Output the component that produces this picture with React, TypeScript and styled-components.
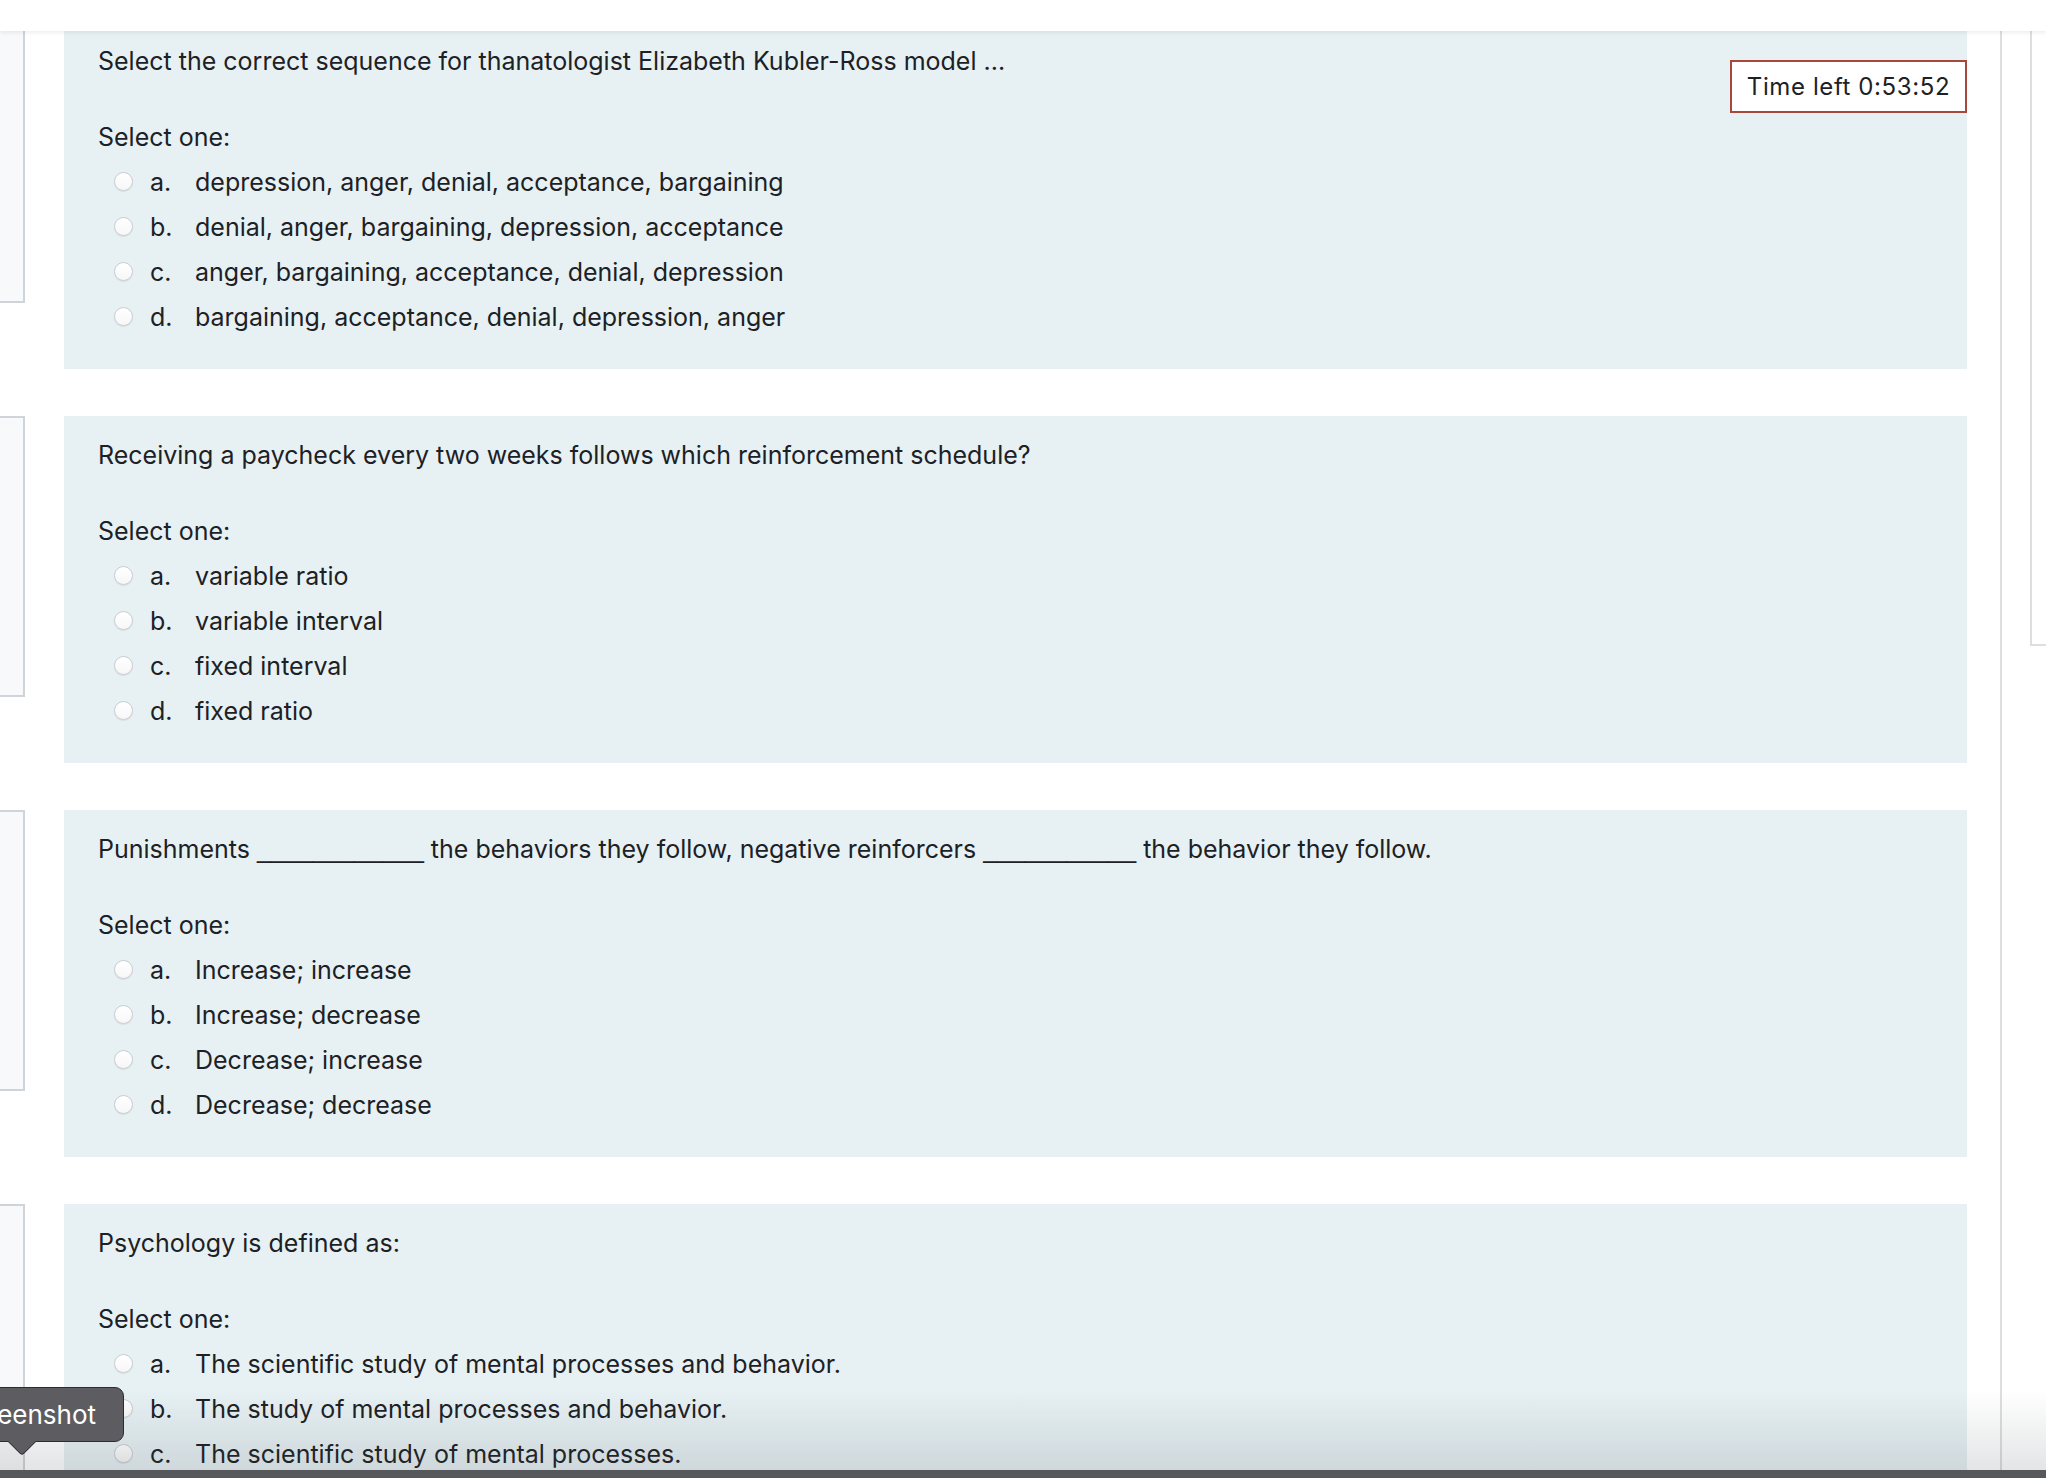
import React from "react";
import styled, { createGlobalStyle } from "styled-components";

const GlobalStyle = createGlobalStyle`
  html, body {
    margin: 0;
    padding: 0;
    height: 100%;
    overflow: hidden;
    background: #ffffff;
  }
  body {
    font-family: "Inter", "Liberation Sans", Arial, sans-serif;
    color: #1d2125;
  }
  * {
    box-sizing: border-box;
  }
`;

const NavBar = styled.div`
  position: fixed;
  top: 0;
  left: 0;
  right: 0;
  height: 31px;
  background: #ffffff;
  box-shadow: 0 2px 4px rgba(0, 0, 0, 0.07);
  z-index: 10;
`;

const Page = styled.div`
  display: flex;
  align-items: stretch;
  min-height: 100vh;
  padding-top: 22px;
`;

const QuestionColumn = styled.div`
  position: relative;
  flex: 0 0 1967px;
  display: flex;
  flex-direction: column;
  gap: 47px;
`;

const QuestionRow = styled.div`
  display: flex;
  align-items: flex-start;
  gap: 39px;
`;

const InfoBox = styled.div<{ $open?: boolean }>`
  flex: 0 0 25px;
  height: ${({ $open }) => ($open ? "600px" : "281px")};
  background: #f8f9fa;
  border: 2px solid #cfd4da;
  border-left: none;
  border-bottom: ${({ $open }) => ($open ? "none" : "2px solid #cfd4da")};
`;

const Card = styled.div`
  flex: 1;
  height: 347px;
  background: #e7f1f4;
  padding: 21px 34px 30px 34px;
  font-size: 25px;
`;

const QuestionText = styled.div`
  line-height: 36px;
  margin-bottom: 40px;
`;

const Blank = styled.span`
  font-family: "Liberation Sans", Arial, sans-serif;
`;

const Prompt = styled.div`
  line-height: 36px;
`;

const Options = styled.div`
  margin-top: 4px;
  padding-left: 16px;
  display: flex;
  flex-direction: column;
`;

const Option = styled.label`
  display: flex;
  align-items: center;
  height: 45px;
`;

const Radio = styled.span`
  flex: 0 0 19px;
  width: 19px;
  height: 19px;
  border-radius: 50%;
  background: linear-gradient(#ffffff, #f7f7f7);
  border: 1px solid #c9cdd1;
  box-shadow: 0 1px 1px rgba(0, 0, 0, 0.08);
`;

const Letter = styled.span`
  flex: 0 0 62px;
  padding-left: 17px;
`;

const Timer = styled.div`
  position: absolute;
  top: 38px;
  right: 0;
  width: 237px;
  height: 53px;
  background: #ffffff;
  border: 2px solid #a8473b;
  display: flex;
  align-items: center;
  justify-content: center;
  font-size: 24px;
  letter-spacing: 0.6px;
  color: #1d2125;
`;

const RightRail = styled.div`
  flex: 0 0 63px;
  display: flex;
  padding-left: 33px;
`;

const Divider = styled.div`
  flex: 0 0 30px;
  border-left: 2px solid #dedede;
  margin-top: -22px;
`;

const SideBlock = styled.div`
  flex: 0 0 40px;
  height: 646px;
  margin-top: -22px;
  border-left: 2px solid #dedede;
  border-bottom: 2px solid #dedede;
`;

const DockShade = styled.div`
  position: fixed;
  left: 0;
  right: 0;
  bottom: 8px;
  height: 80px;
  background: linear-gradient(rgba(60, 70, 75, 0), rgba(60, 70, 75, 0.14));
  pointer-events: none;
  z-index: 20;
`;

const DockBar = styled.div`
  position: fixed;
  left: 0;
  right: 0;
  bottom: 0;
  height: 8px;
  background: #57585b;
  z-index: 21;
`;

const Tooltip = styled.div`
  position: fixed;
  right: calc(100% - 124px);
  top: 1387px;
  height: 55px;
  padding: 0 27px 0 20px;
  display: flex;
  align-items: center;
  background: #5d5d61;
  border: 1.5px solid #2c2c2e;
  border-radius: 9px;
  color: #ffffff;
  font-size: 26px;
  white-space: nowrap;
  z-index: 30;
`;

const TooltipArrow = styled.span`
  position: absolute;
  right: 91px;
  bottom: -11px;
  width: 20px;
  height: 20px;
  background: #5d5d61;
  border-right: 1.5px solid #2c2c2e;
  border-bottom: 1.5px solid #2c2c2e;
  border-bottom-right-radius: 4px;
  transform: rotate(45deg);
`;

type Question = {
  text: React.ReactNode;
  options: string[];
};

const questions: Question[] = [
  {
    text: "Select the correct sequence for thanatologist Elizabeth Kubler-Ross model ...",
    options: [
      "depression, anger, denial, acceptance, bargaining",
      "denial, anger, bargaining, depression, acceptance",
      "anger, bargaining, acceptance, denial, depression",
      "bargaining, acceptance, denial, depression, anger",
    ],
  },
  {
    text: "Receiving a paycheck every two weeks follows which reinforcement schedule?",
    options: ["variable ratio", "variable interval", "fixed interval", "fixed ratio"],
  },
  {
    text: (
      <>
        Punishments <Blank>____________</Blank> the behaviors they follow, negative reinforcers{" "}
        <Blank>___________</Blank> the behavior they follow.
      </>
    ),
    options: ["Increase; increase", "Increase; decrease", "Decrease; increase", "Decrease; decrease"],
  },
  {
    text: "Psychology is defined as:",
    options: [
      "The scientific study of mental processes and behavior.",
      "The study of mental processes and behavior.",
      "The scientific study of mental processes.",
      "The study of behavior.",
    ],
  },
];

const letters = ["a.", "b.", "c.", "d."];

const App: React.FC = () => {
  return (
    <>
      <GlobalStyle />
      <NavBar />
      <Page>
        <QuestionColumn>
          {questions.map((q, i) => (
            <QuestionRow key={i}>
              <InfoBox $open={i === questions.length - 1} />
              <Card>
                <QuestionText>{q.text}</QuestionText>
                <Prompt>Select one:</Prompt>
                <Options>
                  {q.options.map((opt, j) => (
                    <Option key={j}>
                      <Radio />
                      <Letter>{letters[j]}</Letter>
                      <span>{opt}</span>
                    </Option>
                  ))}
                </Options>
              </Card>
            </QuestionRow>
          ))}
          <Timer>Time left 0:53:52</Timer>
        </QuestionColumn>
        <RightRail>
          <Divider />
          <SideBlock />
        </RightRail>
      </Page>
      <DockShade />
      <DockBar />
      <Tooltip>
        Screenshot
        <TooltipArrow />
      </Tooltip>
    </>
  );
};

export default App;
